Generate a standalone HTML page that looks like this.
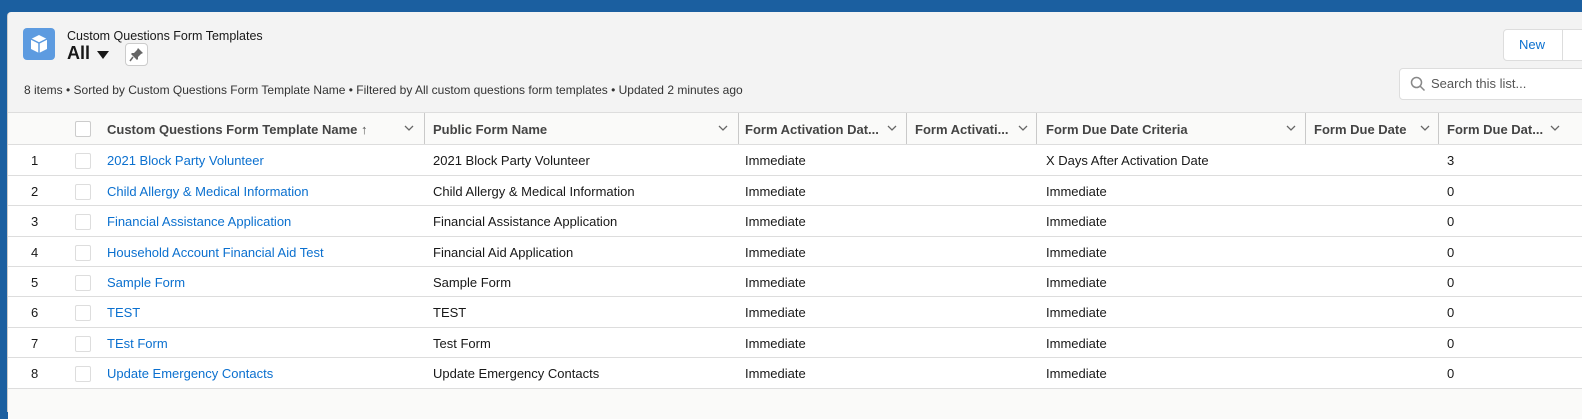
<!DOCTYPE html>
<html><head><style>
*{box-sizing:border-box;margin:0;padding:0}
body{width:1582px;height:402px;overflow:hidden;background:#1b5fa0;font-family:"Liberation Sans",sans-serif;position:relative;font-size:13px;color:#181818}
.card{position:absolute;left:7px;top:12px;width:1600px;height:400px;background:#f3f3f3;border-radius:4px 0 0 0;border-left:1px solid #ccc}
.abs{position:absolute}
.hdr{position:absolute;left:0;top:100px;width:1600px;height:33px;background:#fafaf9;border-top:1px solid #ddd;border-bottom:1px solid #ddd}
.th{position:absolute;top:1px;height:31px;line-height:31px;font-weight:bold;color:#444;font-size:13px;white-space:nowrap}
.sep{position:absolute;top:0;width:1px;height:31px;background:#c9c9c9}
.chev{position:absolute;top:10px;width:10px;height:10px}
.row{position:absolute;left:0;width:1600px;background:#fff;border-bottom:1px solid #ddd}
.row div{position:absolute;top:1px;line-height:30px;white-space:nowrap;font-size:13px}
.row .cb{width:16px;height:16px;border:1px solid #ddd;border-radius:2px;background:#fff;top:8px}
a{color:#0b70cf;text-decoration:none}
</style></head><body>
<div class="card">
 <div class="abs" style="left:15px;top:16px;width:32px;height:32px;background:#5d9be0;border-radius:4px">
  <svg width="32" height="32" viewBox="0 0 32 32"><path d="M16 7l8 4v10l-8 4-8-4V11z" fill="#fff"/><path d="M8 11l8 4 8-4M16 15v10" stroke="#5d9be0" stroke-width="1.5" fill="none"/></svg>
 </div>
 <div class="abs" style="left:59px;top:17px;font-size:12.5px;color:#181818">Custom Questions Form Templates</div>
 <div class="abs" style="left:59px;top:31px;font-size:18px;font-weight:bold">All</div>
 <svg class="abs" style="left:89px;top:39px" width="12" height="8"><path d="M0 0h12L6 8z" fill="#181818"/></svg>
 <div class="abs" style="left:117px;top:31px;width:23px;height:23px;border:1px solid #ccc;border-radius:4px;background:#fff">
  <svg width="21" height="21" viewBox="0 0 21 21"><path d="M12 4l5 5-2 1-3 3v2l-1 1-6-6 1-1h2l3-3z" fill="#666"/><path d="M7 13l-3 4" stroke="#666" stroke-width="1.5"/></svg>
 </div>
 <div class="abs" style="left:16px;top:71px;font-size:12px;color:#333">8 items • Sorted by Custom Questions Form Template Name • Filtered by All custom questions form templates • Updated 2 minutes ago</div>
 <div class="abs" style="left:1495px;top:17px;width:120px;height:32px;border:1px solid #ddd;border-radius:4px;background:#fff"></div>
 <div class="abs" style="left:1494px;top:17px;width:61px;height:32px;border-right:1px solid #ddd;color:#0b70cf;text-align:center;line-height:31px;font-size:13px">New</div>
 <div class="abs" style="left:1391px;top:56px;width:220px;height:32px;border:1px solid #ddd;border-radius:4px;background:#fff"></div>
 <svg class="abs" style="left:1402px;top:64px" width="16" height="16"><circle cx="6.5" cy="6.5" r="5" stroke="#888" stroke-width="1.5" fill="none"/><path d="M10 10l4.5 4.5" stroke="#888" stroke-width="1.5"/></svg>
 <div class="abs" style="left:1423px;top:64px;color:#555;font-size:13px">Search this list...</div>

 <div class="hdr">
  <div class="abs" style="left:67px;top:8px;width:16px;height:16px;border:1px solid #ccc;border-radius:2px;background:#fff"></div>
  <div class="th" style="left:99px">Custom Questions Form Template Name <span style="color:#555;font-weight:normal">↑</span></div>
  <div class="sep" style="left:416px"></div>
  <div class="th" style="left:425px">Public Form Name</div>
  <div class="sep" style="left:730px"></div>
  <div class="th" style="left:737px">Form Activation Dat...</div>
  <div class="sep" style="left:898px"></div>
  <div class="th" style="left:907px">Form Activati...</div>
  <div class="sep" style="left:1028px"></div>
  <div class="th" style="left:1038px">Form Due Date Criteria</div>
  <div class="sep" style="left:1297px"></div>
  <div class="th" style="left:1306px">Form Due Date</div>
  <div class="sep" style="left:1430px"></div>
  <div class="th" style="left:1439px">Form Due Dat...</div>
  <svg class="chev" style="left:396px"><path d="M1 3l4 4 4-4" stroke="#666" stroke-width="1.3" fill="none"/></svg>
  <svg class="chev" style="left:710px"><path d="M1 3l4 4 4-4" stroke="#666" stroke-width="1.3" fill="none"/></svg>
  <svg class="chev" style="left:879px"><path d="M1 3l4 4 4-4" stroke="#666" stroke-width="1.3" fill="none"/></svg>
  <svg class="chev" style="left:1010px"><path d="M1 3l4 4 4-4" stroke="#666" stroke-width="1.3" fill="none"/></svg>
  <svg class="chev" style="left:1278px"><path d="M1 3l4 4 4-4" stroke="#666" stroke-width="1.3" fill="none"/></svg>
  <svg class="chev" style="left:1412px"><path d="M1 3l4 4 4-4" stroke="#666" stroke-width="1.3" fill="none"/></svg>
  <svg class="chev" style="left:1542px"><path d="M1 3l4 4 4-4" stroke="#666" stroke-width="1.3" fill="none"/></svg>
 </div>

 <div class="row" style="top:133px;height:31px"><div style="left:23px">1</div><div class="cb" style="left:67px"></div><div style="left:99px"><a>2021 Block Party Volunteer</a></div><div style="left:425px">2021 Block Party Volunteer</div><div style="left:737px">Immediate</div><div style="left:1038px">X Days After Activation Date</div><div style="left:1439px">3</div></div>
 <div class="row" style="top:164px;height:30px"><div style="left:23px">2</div><div class="cb" style="left:67px"></div><div style="left:99px"><a>Child Allergy &amp; Medical Information</a></div><div style="left:425px">Child Allergy &amp; Medical Information</div><div style="left:737px">Immediate</div><div style="left:1038px">Immediate</div><div style="left:1439px">0</div></div>
 <div class="row" style="top:194px;height:31px"><div style="left:23px">3</div><div class="cb" style="left:67px"></div><div style="left:99px"><a>Financial Assistance Application</a></div><div style="left:425px">Financial Assistance Application</div><div style="left:737px">Immediate</div><div style="left:1038px">Immediate</div><div style="left:1439px">0</div></div>
 <div class="row" style="top:225px;height:30px"><div style="left:23px">4</div><div class="cb" style="left:67px"></div><div style="left:99px"><a>Household Account Financial Aid Test</a></div><div style="left:425px">Financial Aid Application</div><div style="left:737px">Immediate</div><div style="left:1038px">Immediate</div><div style="left:1439px">0</div></div>
 <div class="row" style="top:255px;height:30px"><div style="left:23px">5</div><div class="cb" style="left:67px"></div><div style="left:99px"><a>Sample Form</a></div><div style="left:425px">Sample Form</div><div style="left:737px">Immediate</div><div style="left:1038px">Immediate</div><div style="left:1439px">0</div></div>
 <div class="row" style="top:285px;height:31px"><div style="left:23px">6</div><div class="cb" style="left:67px"></div><div style="left:99px"><a>TEST</a></div><div style="left:425px">TEST</div><div style="left:737px">Immediate</div><div style="left:1038px">Immediate</div><div style="left:1439px">0</div></div>
 <div class="row" style="top:316px;height:30px"><div style="left:23px">7</div><div class="cb" style="left:67px"></div><div style="left:99px"><a>TEst Form</a></div><div style="left:425px">Test Form</div><div style="left:737px">Immediate</div><div style="left:1038px">Immediate</div><div style="left:1439px">0</div></div>
 <div class="row" style="top:346px;height:31px"><div style="left:23px">8</div><div class="cb" style="left:67px"></div><div style="left:99px"><a>Update Emergency Contacts</a></div><div style="left:425px">Update Emergency Contacts</div><div style="left:737px">Immediate</div><div style="left:1038px">Immediate</div><div style="left:1439px">0</div></div>
 <div class="abs" style="left:0;top:377px;width:1600px;height:30px;background:#fafaf9"></div>
</div>
</body></html>
